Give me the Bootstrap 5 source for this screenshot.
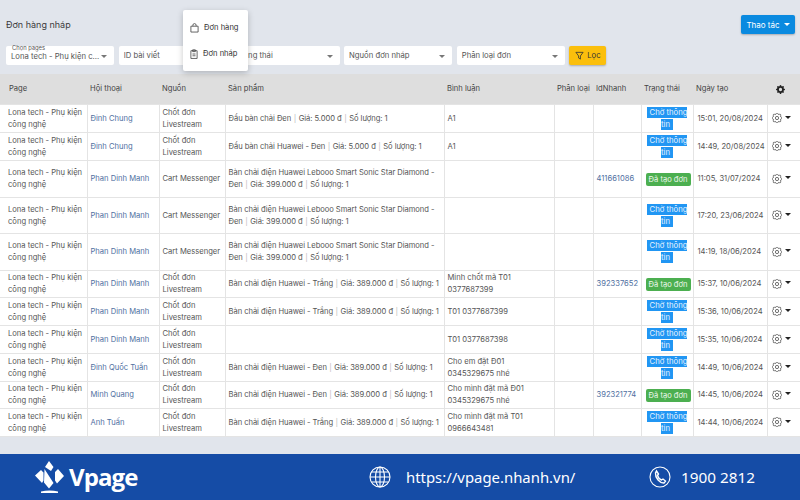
<!doctype html>
<html lang="vi"><head><meta charset="utf-8">
<link href="https://cdn.jsdelivr.net/npm/bootstrap@5.3.0/dist/css/bootstrap.min.css" rel="stylesheet">
<style>
html,body{height:500px;overflow:hidden}
body{width:800px;background:#e1e5ec;font-family:Inter,"Liberation Sans",sans-serif;color:#444;display:flex;flex-direction:column}
.app-main{height:454px;position:relative}
.top-bar{height:46px;padding:15px 5px 0 6px}
.page-title{font-size:9px;line-height:18px;color:#3c3c3c;padding-top:1px}
.act-btn{background:#0a8ae0;color:#fff;font-size:8px;height:19px;width:54px;border-radius:2px;box-shadow:0 1px 2px rgba(0,0,0,.25)}
.tri{display:inline-block;width:0;height:0;border-left:3px solid transparent;border-right:3px solid transparent;border-top:3.5px solid currentColor}
.filter-bar{height:28px;padding:0 6px;gap:4.4px}
.field{width:108.3px;height:19px;background:#fff;border-radius:2px;font-size:7.7px;color:#555;padding:1px 7px 0 5px;position:relative;flex:none;white-space:nowrap}
.field .tri{color:#777}
.field-name{position:absolute;left:6px;top:-2px;font-size:5.8px;line-height:7px;color:#555}
.field-val{padding-top:2px}
.loc-btn{width:37px;height:19px;background:#fbbf0c;border-radius:2px;font-size:7.7px;color:#333;box-shadow:0 1px 2px rgba(0,0,0,.25);gap:3px}
.pop-menu{position:absolute;left:183px;top:10px;width:64.5px;height:60.5px;background:#fff;border-radius:2px;box-shadow:0 2px 6px rgba(0,0,0,.22);font-size:7.6px;color:#333;z-index:5;padding-top:5px}
.pop-item{height:26px;padding-left:7px;gap:5px}
.data-tbl{table-layout:fixed;width:800px;border-collapse:collapse;font-size:7.6px;line-height:12px;color:#555;background:#fff}
.data-tbl col:nth-child(1){width:87px}.data-tbl col:nth-child(2){width:72px}.data-tbl col:nth-child(3){width:66px}.data-tbl col:nth-child(4){width:219px}.data-tbl col:nth-child(5){width:110px}.data-tbl col:nth-child(6){width:39px}.data-tbl col:nth-child(7){width:48px}.data-tbl col:nth-child(8){width:52px}.data-tbl col:nth-child(9){width:74px}.data-tbl col:nth-child(10){width:33px}
.data-tbl th{background:#dedede;height:30px;font-weight:400;color:#444;padding:1px 0 0 3px;white-space:nowrap;border:0}
.data-tbl th:first-child{padding-left:9px}
.data-tbl th:last-child{padding-left:9px}
.data-tbl td{border:1px solid #e4e4e4;padding:1px 2px 0 3px;vertical-align:middle}
.data-tbl td:first-child{border-left:0;padding-left:8px}
.data-tbl td:last-child{border-right:0}
.data-tbl td:nth-child(4){padding-right:0;letter-spacing:-.05px}
.data-tbl td:nth-child(9){padding-left:4px}
.data-tbl a{color:#50709f;text-decoration:none}
.rh27{height:27px}.rh28{height:28px}.rh36{height:36px}.rh37{height:37px}
.sep{color:#bbb;margin:0 2.5px}
.wait-tag{background:#2196f3;color:#e9f4fe;padding:1px 3px;font-size:7.7px}
.data-tbl td.st-cell{text-align:center;padding:1px 4px 0}
.done-tag{display:inline-block;background:#4caf50;color:#eef8ee;padding:1px 3px;border-radius:2px;line-height:11px;white-space:nowrap}
.data-tbl td.gear-cell{color:#333;white-space:nowrap;padding:1px 0 0 4px}
.gear-cell .tri{color:#222;margin-left:3px;vertical-align:2px}
.foot-bar{height:46px;background:#154ca6;color:#fff;font-family:"Noto Sans","Open Sans",sans-serif;padding-left:35px}
.brand-name{font-family:"Open Sans","Noto Sans",sans-serif;font-weight:700;font-size:24px;letter-spacing:-.9px;line-height:30px;margin-left:5px;width:300px;flex:none}
.foot-link{font-size:14.9px;margin-left:15px;width:243px;flex:none}
.foot-tel{font-size:15.3px;margin-left:10px}
</style></head>
<body>
<svg width="0" height="0" class="position-absolute"><defs>
<symbol id="g" viewBox="0 0 16 16"><path d="M9.405 1.05c-.413-1.4-2.397-1.4-2.81 0l-.1.34a1.464 1.464 0 0 1-2.105.872l-.31-.17c-1.283-.698-2.686.705-1.987 1.987l.169.311c.446.82.023 1.841-.872 2.105l-.34.1c-1.4.413-1.4 2.397 0 2.81l.34.1a1.464 1.464 0 0 1 .872 2.105l-.17.31c-.698 1.283.705 2.686 1.987 1.987l.311-.169a1.464 1.464 0 0 1 2.105.872l.1.34c.413 1.4 2.397 1.4 2.81 0l.1-.34a1.464 1.464 0 0 1 2.105-.872l.31.17c1.283.698 2.686-.705 1.987-1.987l-.169-.311a1.464 1.464 0 0 1 .872-2.105l.34-.1c1.4-.413 1.4-2.397 0-2.81l-.34-.1a1.464 1.464 0 0 1-.872-2.105l.17-.31c.698-1.283-.705-2.686-1.987-1.987l-.311.169a1.464 1.464 0 0 1-2.105-.872l-.1-.34z" fill="none" stroke="currentColor" stroke-width="1.1"/><circle cx="8" cy="8" r="2.6" fill="none" stroke="currentColor" stroke-width="1.1"/></symbol>
</defs></svg>
<div class="app-main">
  <div class="top-bar d-flex justify-content-between align-items-start">
    <div class="page-title">Đơn hàng nháp</div>
    <div class="act-btn d-flex align-items-center justify-content-center gap-1">Thao tác <span class="tri"></span></div>
  </div>
  <div class="filter-bar d-flex">
    <div class="field d-flex align-items-center justify-content-between"><span class="field-name">Chọn pages</span><span class="field-val">Lona tech - Phụ kiện c...</span><span class="tri"></span></div>
    <div class="field d-flex align-items-center">ID bài viết</div>
    <div class="field d-flex align-items-center justify-content-between"><span>Trạng thái</span><span class="tri"></span></div>
    <div class="field d-flex align-items-center justify-content-between"><span>Nguồn đơn nháp</span><span class="tri"></span></div>
    <div class="field d-flex align-items-center justify-content-between"><span>Phân loại đơn</span><span class="tri"></span></div>
    <div class="loc-btn d-flex align-items-center justify-content-center"><svg width="9" height="9" viewBox="0 0 10 10"><path d="M1 1.500h8L6 5.500V9L4 7.800V5.500z" fill="none" stroke="#333" stroke-width=".9"/></svg>Lọc</div>
  </div>
  <div class="pop-menu">
    <div class="pop-item d-flex align-items-center"><svg width="9" height="10" viewBox="0 0 10 11"><path d="M1 3.500h8v6.500H1z M3.200 3.500V2.400a1.800 1.800 0 0 1 3.600 0v1.100" fill="none" stroke="#444" stroke-width=".9"/></svg>Đơn hàng</div>
    <div class="pop-item d-flex align-items-center"><svg width="8" height="10" viewBox="0 0 9 11"><path d="M1 1.800h7v8.700H1z M3 .8h3v2H3z M2.800 5.500h3.400 M2.800 7.500h3.400" fill="none" stroke="#444" stroke-width=".9"/></svg>Đơn nháp</div>
  </div>
  <table class="data-tbl">
    <colgroup><col><col><col><col><col><col><col><col><col><col></colgroup>
    <thead><tr><th>Page</th><th>Hội thoại</th><th>Nguồn</th><th>Sản phẩm</th><th>Bình luận</th><th>Phân loại</th><th>IdNhanh</th><th>Trạng thái</th><th>Ngày tạo</th><th><svg width="9" height="9" viewBox="0 0 16 16"><path fill="#222" d="M9.405 1.05c-.413-1.4-2.397-1.4-2.81 0l-.1.34a1.464 1.464 0 0 1-2.105.872l-.31-.17c-1.283-.698-2.686.705-1.987 1.987l.169.311c.446.82.023 1.841-.872 2.105l-.34.1c-1.4.413-1.4 2.397 0 2.81l.34.1a1.464 1.464 0 0 1 .872 2.105l-.17.31c-.698 1.283.705 2.686 1.987 1.987l.311-.169a1.464 1.464 0 0 1 2.105.872l.1.34c.413 1.4 2.397 1.4 2.81 0l.1-.34a1.464 1.464 0 0 1 2.105-.872l.31.17c1.283.698 2.686-.705 1.987-1.987l-.169-.311a1.464 1.464 0 0 1 .872-2.105l.34-.1c1.4-.413 1.4-2.397 0-2.81l-.34-.1a1.464 1.464 0 0 1-.872-2.105l.17-.31c.698-1.283-.705-2.686-1.987-1.987l-.311.169a1.464 1.464 0 0 1-2.105-.872l-.1-.34zM8 10.930a2.929 2.929 0 1 1 0-5.860 2.929 2.929 0 0 1 0 5.858z"/></svg></th></tr></thead>
    <tbody>
<tr class="rh28"><td>Lona tech - Phụ kiện công nghệ</td><td><a href="#">Đinh Chung</a></td><td>Chốt đơn Livestream</td><td>Đầu bàn chải Đen<span class="sep">|</span>Giá: 5.000 đ<span class="sep">|</span>Số lượng: 1</td><td>A1</td><td></td><td></td><td class="st-cell"><span class="wait-tag">Chờ thông tin</span></td><td class="text-nowrap">15:01, 20/08/2024</td><td class="gear-cell"><svg width="10" height="10"><use href="#g"/></svg><span class="tri"></span></td></tr>
<tr class="rh28"><td>Lona tech - Phụ kiện công nghệ</td><td><a href="#">Đinh Chung</a></td><td>Chốt đơn Livestream</td><td>Đầu bàn chải Huawei - Đen<span class="sep">|</span>Giá: 5.000 đ<span class="sep">|</span>Số lượng: 1</td><td>A1</td><td></td><td></td><td class="st-cell"><span class="wait-tag">Chờ thông tin</span></td><td class="text-nowrap">14:49, 20/08/2024</td><td class="gear-cell"><svg width="10" height="10"><use href="#g"/></svg><span class="tri"></span></td></tr>
<tr class="rh37"><td>Lona tech - Phụ kiện công nghệ</td><td><a href="#">Phan Dinh Manh</a></td><td>Cart Messenger</td><td>Bàn chải điện Huawei Lebooo Smart Sonic Star Diamond - Đen<span class="sep">|</span>Giá: 399.000 đ<span class="sep">|</span>Số lượng: 1</td><td></td><td></td><td><a href="#">411661086</a></td><td class="st-cell"><span class="done-tag">Đã tạo đơn</span></td><td class="text-nowrap">11:05, 31/07/2024</td><td class="gear-cell"><svg width="10" height="10"><use href="#g"/></svg><span class="tri"></span></td></tr>
<tr class="rh36"><td>Lona tech - Phụ kiện công nghệ</td><td><a href="#">Phan Dinh Manh</a></td><td>Cart Messenger</td><td>Bàn chải điện Huawei Lebooo Smart Sonic Star Diamond - Đen<span class="sep">|</span>Giá: 399.000 đ<span class="sep">|</span>Số lượng: 1</td><td></td><td></td><td></td><td class="st-cell"><span class="wait-tag">Chờ thông tin</span></td><td class="text-nowrap">17:20, 23/06/2024</td><td class="gear-cell"><svg width="10" height="10"><use href="#g"/></svg><span class="tri"></span></td></tr>
<tr class="rh37"><td>Lona tech - Phụ kiện công nghệ</td><td><a href="#">Phan Dinh Manh</a></td><td>Cart Messenger</td><td>Bàn chải điện Huawei Lebooo Smart Sonic Star Diamond - Đen<span class="sep">|</span>Giá: 399.000 đ<span class="sep">|</span>Số lượng: 1</td><td></td><td></td><td></td><td class="st-cell"><span class="wait-tag">Chờ thông tin</span></td><td class="text-nowrap">14:19, 18/06/2024</td><td class="gear-cell"><svg width="10" height="10"><use href="#g"/></svg><span class="tri"></span></td></tr>
<tr class="rh27"><td>Lona tech - Phụ kiện công nghệ</td><td><a href="#">Phan Dinh Manh</a></td><td>Chốt đơn Livestream</td><td>Bàn chải điện Huawei - Trắng<span class="sep">|</span>Giá: 389.000 đ<span class="sep">|</span>Số lượng: 1</td><td>Minh chốt mã T01 0377687399</td><td></td><td><a href="#">392337652</a></td><td class="st-cell"><span class="done-tag">Đã tạo đơn</span></td><td class="text-nowrap">15:37, 10/06/2024</td><td class="gear-cell"><svg width="10" height="10"><use href="#g"/></svg><span class="tri"></span></td></tr>
<tr class="rh28"><td>Lona tech - Phụ kiện công nghệ</td><td><a href="#">Phan Dinh Manh</a></td><td>Chốt đơn Livestream</td><td>Bàn chải điện Huawei - Trắng<span class="sep">|</span>Giá: 389.000 đ<span class="sep">|</span>Số lượng: 1</td><td>T01 0377687399</td><td></td><td></td><td class="st-cell"><span class="wait-tag">Chờ thông tin</span></td><td class="text-nowrap">15:36, 10/06/2024</td><td class="gear-cell"><svg width="10" height="10"><use href="#g"/></svg><span class="tri"></span></td></tr>
<tr class="rh28"><td>Lona tech - Phụ kiện công nghệ</td><td><a href="#">Phan Dinh Manh</a></td><td>Chốt đơn Livestream</td><td></td><td>T01 0377687398</td><td></td><td></td><td class="st-cell"><span class="wait-tag">Chờ thông tin</span></td><td class="text-nowrap">15:35, 10/06/2024</td><td class="gear-cell"><svg width="10" height="10"><use href="#g"/></svg><span class="tri"></span></td></tr>
<tr class="rh28"><td>Lona tech - Phụ kiện công nghệ</td><td><a href="#">Đinh Quốc Tuấn</a></td><td>Chốt đơn Livestream</td><td>Bàn chải điện Huawei - Đen<span class="sep">|</span>Giá: 389.000 đ<span class="sep">|</span>Số lượng: 1</td><td>Cho em đặt Đ01 0345329675 nhé</td><td></td><td></td><td class="st-cell"><span class="wait-tag">Chờ thông tin</span></td><td class="text-nowrap">14:49, 10/06/2024</td><td class="gear-cell"><svg width="10" height="10"><use href="#g"/></svg><span class="tri"></span></td></tr>
<tr class="rh27"><td>Lona tech - Phụ kiện công nghệ</td><td><a href="#">Minh Quang</a></td><td>Chốt đơn Livestream</td><td>Bàn chải điện Huawei - Đen<span class="sep">|</span>Giá: 389.000 đ<span class="sep">|</span>Số lượng: 1</td><td>Cho mình đặt mã Đ01 0345329675 nhé</td><td></td><td><a href="#">392321774</a></td><td class="st-cell"><span class="done-tag">Đã tạo đơn</span></td><td class="text-nowrap">14:45, 10/06/2024</td><td class="gear-cell"><svg width="10" height="10"><use href="#g"/></svg><span class="tri"></span></td></tr>
<tr class="rh28"><td>Lona tech - Phụ kiện công nghệ</td><td><a href="#">Anh Tuấn</a></td><td>Chốt đơn Livestream</td><td>Bàn chải điện Huawei - Trắng<span class="sep">|</span>Giá: 389.000 đ<span class="sep">|</span>Số lượng: 1</td><td>Cho mình đặt mã T01 0966643481</td><td></td><td></td><td class="st-cell"><span class="wait-tag">Chờ thông tin</span></td><td class="text-nowrap">14:44, 10/06/2024</td><td class="gear-cell"><svg width="10" height="10"><use href="#g"/></svg><span class="tri"></span></td></tr>
    </tbody>
  </table>
</div>
<footer class="foot-bar d-flex align-items-center">
  <svg width="29" height="34" viewBox="0 0 29 34"><path fill="#fff" d="M14 1l4.500 6-2.500 4-6-4z M6 10l2.500 2.500v8L7 23 0 15.500z M20 12l3-3 6 7-7 7.500-2-3z M9.500 9l9 14-4.500 5.500-5-6z"/><path fill="#fff" d="M6 31.500q8.500-2 17 0v1.500H6z"/></svg>
  <span class="brand-name">Vpage</span>
  <svg width="22" height="22" viewBox="0 0 22 22" fill="none" stroke="#fff" stroke-width="1.100"><circle cx="11" cy="11" r="10"/><ellipse cx="11" cy="11" rx="4.500" ry="10"/><path d="M11 1v20M1 11h20M2.500 6h17M2.500 16h17"/></svg>
  <span class="foot-link">https://vpage.nhanh.vn/</span>
  <svg width="22" height="22" viewBox="0 0 22 22" fill="none" stroke="#fff" stroke-width="1.100"><circle cx="11" cy="11" r="10"/><path d="M7.500 5l2 3-1 1.500c.5 2 2 3.500 4 4.500l1.500-1 2.500 2-1.500 2c-4 .3-9-5-8.500-10z" stroke-width="1.400"/></svg>
  <span class="foot-tel">1900 2812</span>
</footer>
</body></html>
